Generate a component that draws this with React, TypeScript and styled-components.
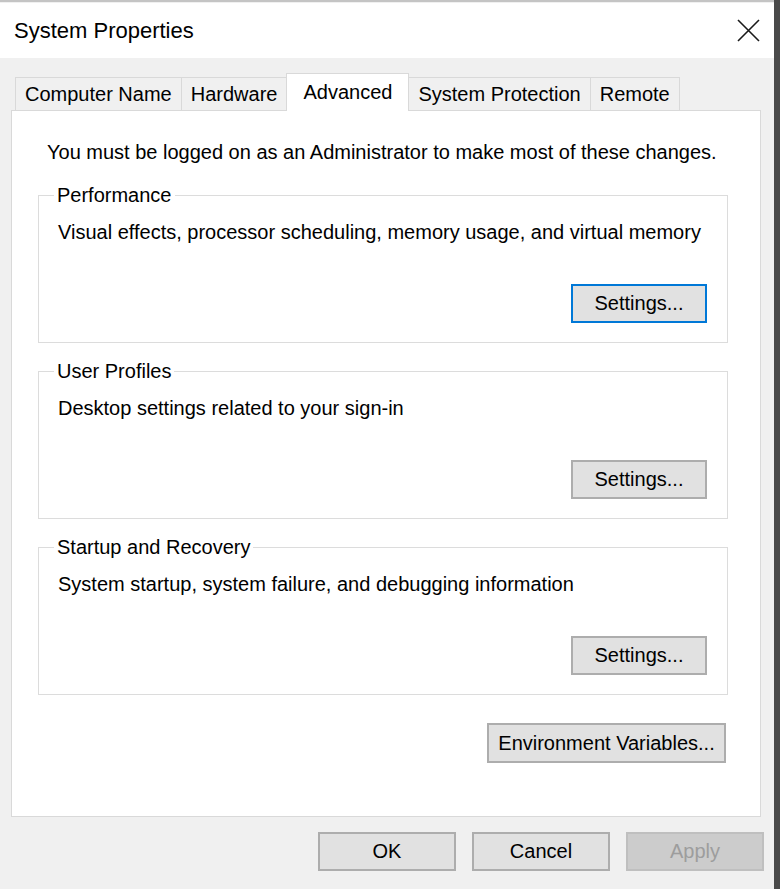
import React from 'react';
import styled, { createGlobalStyle } from 'styled-components';

const GlobalStyle = createGlobalStyle`
  html, body {
    margin: 0;
    padding: 0;
    background: #4a4a4a;
  }
  body {
    font-family: 'Liberation Sans', Arial, sans-serif;
    color: #000;
  }
`;

const Window = styled.div`
  width: 774px;
  height: 887px;
  border-top: 2px solid #c4c4c4;
  background: #f0f0f0;
  display: flex;
  flex-direction: column;
`;

const TitleBar = styled.div`
  height: 55px;
  margin-top: 1px;
  background: #fff;
  display: flex;
  align-items: center;
  justify-content: space-between;
  padding: 0 14px;
`;

const Title = styled.span`
  font-size: 22px;
`;

const CloseButton = styled.div`
  width: 23px;
  height: 23px;
  display: flex;
  svg {
    display: block;
  }
`;

const Body = styled.div`
  flex: 1;
  display: flex;
  flex-direction: column;
  padding: 19px 10px 0 11px;
`;

const TabBar = styled.div`
  display: flex;
  align-items: flex-end;
  height: 33px;
  padding-left: 4px;
  position: relative;
  z-index: 1;
`;

const Tab = styled.div<{ $active?: boolean }>`
  box-sizing: border-box;
  height: ${(p) => (p.$active ? '38px' : '33px')};
  margin-bottom: ${(p) => (p.$active ? '-1px' : '0')};
  margin-left: -1px;
  padding: 0 ${(p) => (p.$active ? '16px' : '9px')};
  border: 1px solid #d9d9d9;
  border-bottom: none;
  background: ${(p) => (p.$active ? '#fff' : '#f0f0f0')};
  font-size: 20px;
  display: flex;
  align-items: center;
  white-space: nowrap;
  position: relative;
  z-index: ${(p) => (p.$active ? 2 : 1)};

  &:first-child {
    margin-left: 0;
  }
`;

const Panel = styled.div`
  width: 750px;
  box-sizing: border-box;
  background: #fff;
  border: 1px solid #d9d9d9;
  padding: 29px 32px 53px 26px;
  display: flex;
  flex-direction: column;
`;

const Intro = styled.p`
  margin: 0 0 19px 9px;
  font-size: 20px;
  line-height: 24px;
`;

const Group = styled.fieldset`
  margin: 0 0 16px;
  padding: 0 20px 19px 19px;
  border: 1px solid #dcdcdc;
  min-inline-size: 0;
  display: flex;
  flex-direction: column;

  &:last-of-type {
    margin-bottom: 0;
  }
`;

const Legend = styled.legend`
  padding: 0 3px;
  margin-left: -4px;
  font-size: 20px;
  line-height: 24px;
`;

const Description = styled.p`
  margin: 13px 0 0;
  font-size: 20px;
  line-height: 24px;
`;

const ButtonRow = styled.div<{ $top?: number }>`
  display: flex;
  justify-content: flex-end;
  margin-top: ${(p) => p.$top ?? 0}px;
`;

const Button = styled.button<{ $width: number; $height?: number; $focused?: boolean }>`
  width: ${(p) => p.$width}px;
  height: ${(p) => p.$height ?? 39}px;
  box-sizing: border-box;
  padding: 0;
  font-family: 'Liberation Sans', Arial, sans-serif;
  font-size: 20px;
  color: #000;
  background: #e1e1e1;
  border: 2px solid ${(p) => (p.$focused ? '#0078d7' : '#adadad')};
  border-radius: 0;
  outline: none;

  &:disabled {
    background: #cccccc;
    border-color: #bfbfbf;
    color: #9d9d9d;
  }
`;

const EnvRow = styled(ButtonRow)`
  margin-top: 28px;
  margin-right: 2px;
`;

const Footer = styled.div`
  display: flex;
  justify-content: flex-end;
  gap: 16px;
  margin-top: 15px;
`;

const tabs = ['Computer Name', 'Hardware', 'Advanced', 'System Protection', 'Remote'];

const groups = [
  {
    title: 'Performance',
    text: 'Visual effects, processor scheduling, memory usage, and virtual memory',
    focused: true,
  },
  { title: 'User Profiles', text: 'Desktop settings related to your sign-in' },
  { title: 'Startup and Recovery', text: 'System startup, system failure, and debugging information' },
];

const App = () => {
  return (
    <>
      <GlobalStyle />
      <Window>
        <TitleBar>
          <Title>System Properties</Title>
          <CloseButton>
            <svg width="23" height="23" viewBox="0 0 23 23">
              <path d="M1 1 L22 22 M22 1 L1 22" stroke="#1a1a1a" strokeWidth="1.6" fill="none" />
            </svg>
          </CloseButton>
        </TitleBar>
        <Body>
          <TabBar>
            {tabs.map((t) => (
              <Tab key={t} $active={t === 'Advanced'}>
                {t}
              </Tab>
            ))}
          </TabBar>
          <Panel>
            <Intro>You must be logged on as an Administrator to make most of these changes.</Intro>
            {groups.map((g) => (
              <Group key={g.title}>
                <Legend>{g.title}</Legend>
                <Description>{g.text}</Description>
                <ButtonRow $top={40}>
                  <Button $width={136} $focused={g.focused}>
                    Settings...
                  </Button>
                </ButtonRow>
              </Group>
            ))}
            <EnvRow>
              <Button $width={239} $height={40}>
                Environment Variables...
              </Button>
            </EnvRow>
          </Panel>
          <Footer>
            <Button $width={138}>OK</Button>
            <Button $width={138}>Cancel</Button>
            <Button $width={138} disabled>
              Apply
            </Button>
          </Footer>
        </Body>
      </Window>
    </>
  );
};

export default App;
